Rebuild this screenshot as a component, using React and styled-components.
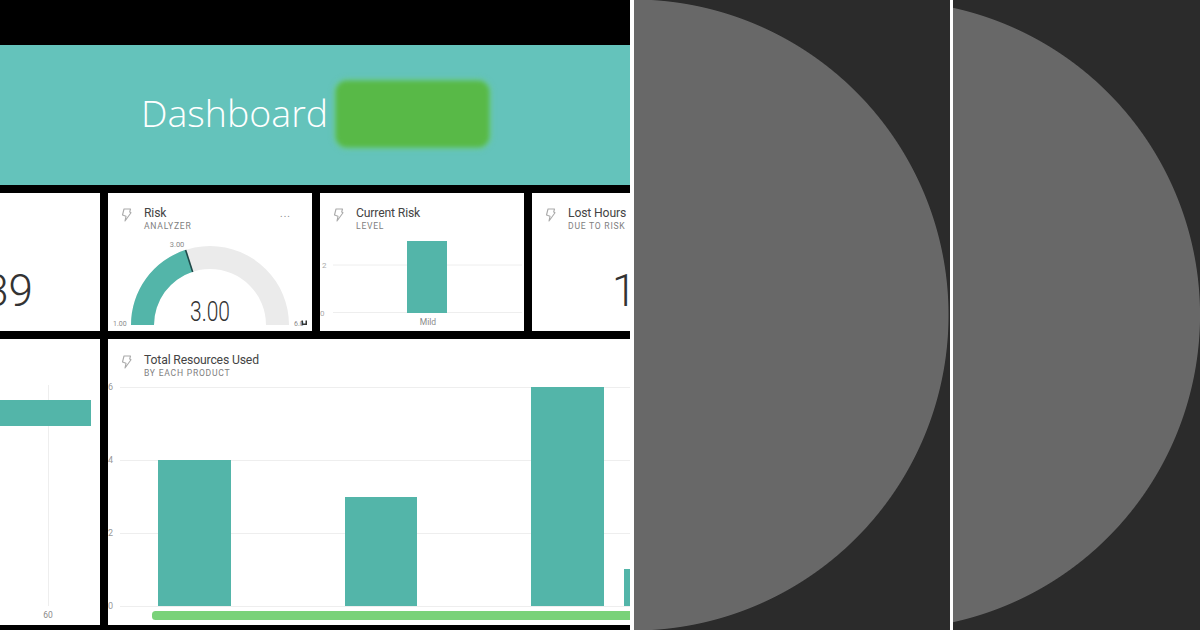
import React from "react";
import styled, { createGlobalStyle } from "styled-components";

const Global = createGlobalStyle`
  html, body { margin: 0; padding: 0; background: #fff; }
  body { font-family: "Roboto", "Liberation Sans", sans-serif; }
`;
const Page = styled.div`
  width: 1200px; height: 630px; display: flex; overflow: hidden; background: #fff;
`;
const Report = styled.main`
  width: 630px; height: 630px; flex: none; background: #000; overflow: hidden;
  padding-top: 45px; box-sizing: border-box; display: flex; flex-direction: column; gap: 8px;
`;
const Banner = styled.header`
  height: 140px; flex: none; background: #64c3bb; display: flex; align-items: center;
  padding-left: 141px; gap: 8px;
`;
const Heading = styled.h1`
  margin: -4px 0 0; font-family: "Open Sans", sans-serif; font-weight: 300; font-size: 37.5px; color: #fff;
  line-height: 1; white-space: nowrap;
`;
const Redaction = styled.div`
  width: 153px; height: 66px; border-radius: 11px; background: #58b947;
  box-shadow: 0 0 4px 1px #6ecf70; filter: blur(2px); margin-top: -2px;
`;
const Row = styled.section`
  display: grid; grid-template-columns: ${p => p.$cols}; gap: 8px; margin-left: -104px;
  height: ${p => p.$h}px; flex: none;
`;
const Card = styled.article`
  background: #fff; display: flex; flex-direction: column; overflow: hidden; min-width: 0;
`;
const CardHead = styled.div`
  height: 40px; flex: none; box-sizing: border-box; display: flex; padding: ${p => p.$top}px 0 0 13px; gap: 12px;
`;
const Bolt = styled.svg`
  width: 11px; height: 14px; flex: none; margin-top: 2px;
`;
const Titles = styled.div`
  flex: 1; min-width: 0; white-space: nowrap;
`;
const Title = styled.div`
  font-size: 12.2px; line-height: 14px; color: #444; font-weight: 400; letter-spacing: -0.15px;
`;
const Sub = styled.div`
  font-size: 8.6px; line-height: 11px; color: #808080; letter-spacing: 0.75px; margin-top: 1px; text-transform: uppercase;
`;
const More = styled.div`
  font-size: 10px; line-height: 10px; color: #888; letter-spacing: 1px; margin: 3px 21px 0 0;
`;
const BigNumber = styled.div`
  font-weight: 300; font-size: 44px; line-height: 46px; color: #333; text-align: ${p => p.$align};
  padding: ${p => p.$pad}; white-space: nowrap;
`;
const Chart = styled.svg`
  display: block; flex: none; font-family: "Roboto", "Liberation Sans", sans-serif;
`;
const Side = styled.aside`
  flex: none; height: 630px; width: ${p => p.$w}px; margin-left: ${p => p.$ml}px;
  background: radial-gradient(circle ${p => p.$r}px at ${p => p.$cx}px 315px, #686868 99.7%, #2b2b2b 100%);
`;

const TEAL = "#53b5a9", GRID = "#eeeeee", AXIS = "#8a8a8a";

const BoltIcon = () => (
  <Bolt viewBox="0 0 11 14" fill="none" stroke="#aaa" strokeWidth="1.1" strokeLinejoin="round">
    <path d="M3 1 L9.5 1 L8.7 4 L10 4.8 L4 13 L5 8.3 L1.5 7 Z" />
  </Bolt>
);

const Head = ({ title, sub, more, top = 13 }) => (
  <CardHead $top={top}>
    <BoltIcon />
    <Titles>
      <Title>{title}</Title>
      <Sub>{sub}</Sub>
    </Titles>
    {more && <More>...</More>}
  </CardHead>
);

const polar = (r, deg) => {
  const a = (deg * Math.PI) / 180;
  return [210 - r * Math.cos(a), 325 - r * Math.sin(a)];
};
const arc = (r1, r2, from, to) => {
  const [a, b] = polar(r1, from), [c, d] = polar(r1, to), [e, f] = polar(r2, to), [g, h] = polar(r2, from);
  return `M${a} ${b} A${r1} ${r1} 0 0 1 ${c} ${d} L${e} ${f} A${r2} ${r2} 0 0 0 ${g} ${h} Z`;
};

const Gauge = () => (
  <Chart width="204" height="98" viewBox="108 233 204 98">
    <path d={arc(79, 56, 0, 180)} fill="#ebebeb" />
    <path d={arc(79, 56, 0, 72)} fill={TEAL} />
    <path d="M185.6 250 L192.7 272" stroke="#1f4a4a" strokeWidth="1.6" />
    <text x="177" y="247" fontSize="7.5" fill={AXIS} textAnchor="middle">3.00</text>
    <text x="113" y="326" fontSize="7" fill={AXIS}>1.00</text>
    <text x="294" y="326" fontSize="7" fill={AXIS}>6.0</text>
    <path d="M301.5 320.5 V325 H307 V320.5 H305.5 V323.5 H303 V320.5 Z" fill="#333" />
    <text x="190" y="321" fontSize="27" fontWeight="300" fill="#333" textLength="40" lengthAdjust="spacingAndGlyphs">3.00</text>
  </Chart>
);

const RiskChart = () => (
  <Chart width="204" height="98" viewBox="320 233 204 98">
    <line x1="333" x2="522" y1="265" y2="265" stroke={GRID} />
    <line x1="333" x2="522" y1="312.5" y2="312.5" stroke={GRID} />
    <rect x="407" y="241" width="40" height="72" fill={TEAL} />
    <text x="322" y="268" fontSize="8" fill="#aaa">2</text>
    <text x="320" y="316" fontSize="8" fill="#aaa">0</text>
    <text x="428" y="325" fontSize="8.5" fill={AXIS} textAnchor="middle">Mild</text>
  </Chart>
);

const HBar = () => (
  <Chart width="204" height="246" viewBox="-104 379 204 246">
    <line x1="48.5" x2="48.5" y1="385" y2="606" stroke={GRID} />
    <rect x="-104" y="400" width="195" height="26" fill={TEAL} />
    <text x="48" y="618" fontSize="8.5" fill={AXIS} textAnchor="middle">60</text>
  </Chart>
);

const ResourceBars = [
  { x: 158, w: 73, y: 460 },
  { x: 345, w: 72, y: 497 },
  { x: 531, w: 73, y: 387 },
  { x: 624, w: 40, y: 569 },
];

const Resources = () => (
  <Chart width="560" height="246" viewBox="108 379 560 246">
    {[387, 460, 533, 606].map((y, i) => (
      <g key={y}>
        <line x1="120" x2="668" y1={y + 0.5} y2={y + 0.5} stroke={GRID} />
        <text x="108" y={y + 3} fontSize="9" fill="#999">{[6, 4, 2, 0][i]}</text>
      </g>
    ))}
    {ResourceBars.map(b => (
      <rect key={b.x} x={b.x} y={b.y} width={b.w} height={606 - b.y} fill={TEAL} />
    ))}
    <rect x="152" y="611" width="520" height="9" rx="3.5" fill="#79d279" />
  </Chart>
);

export default function App() {
  return (
    <Page>
      <Global />
      <Report>
        <Banner>
          <Heading>Dashboard</Heading>
          <Redaction />
        </Banner>
        <Row $cols="204px 204px 204px 204px" $h={138}>
          <Card>
            <Head title="Percent" sub="Complete" />
            <BigNumber $align="right" $pad="35px 67px 0 0">39</BigNumber>
          </Card>
          <Card>
            <Head title="Risk" sub="Analyzer" more />
            <Gauge />
          </Card>
          <Card>
            <Head title="Current Risk" sub="Level" />
            <RiskChart />
          </Card>
          <Card>
            <Head title="Lost Hours" sub="Due to risk" />
            <BigNumber $align="left" $pad="35px 0 0 80px">12</BigNumber>
          </Card>
        </Row>
        <Row $cols="204px 560px" $h={286}>
          <Card>
            <Head title="Resources" sub="By product" top={14} />
            <HBar />
          </Card>
          <Card>
            <Head title="Total Resources Used" sub="By each product" top={14} />
            <Resources />
          </Card>
        </Row>
      </Report>
      <Side $w={316} $ml={4} $cx={-1} $r={316} />
      <Side $w={247} $ml={3} $cx={-67.5} $r={315} />
    </Page>
  );
}
